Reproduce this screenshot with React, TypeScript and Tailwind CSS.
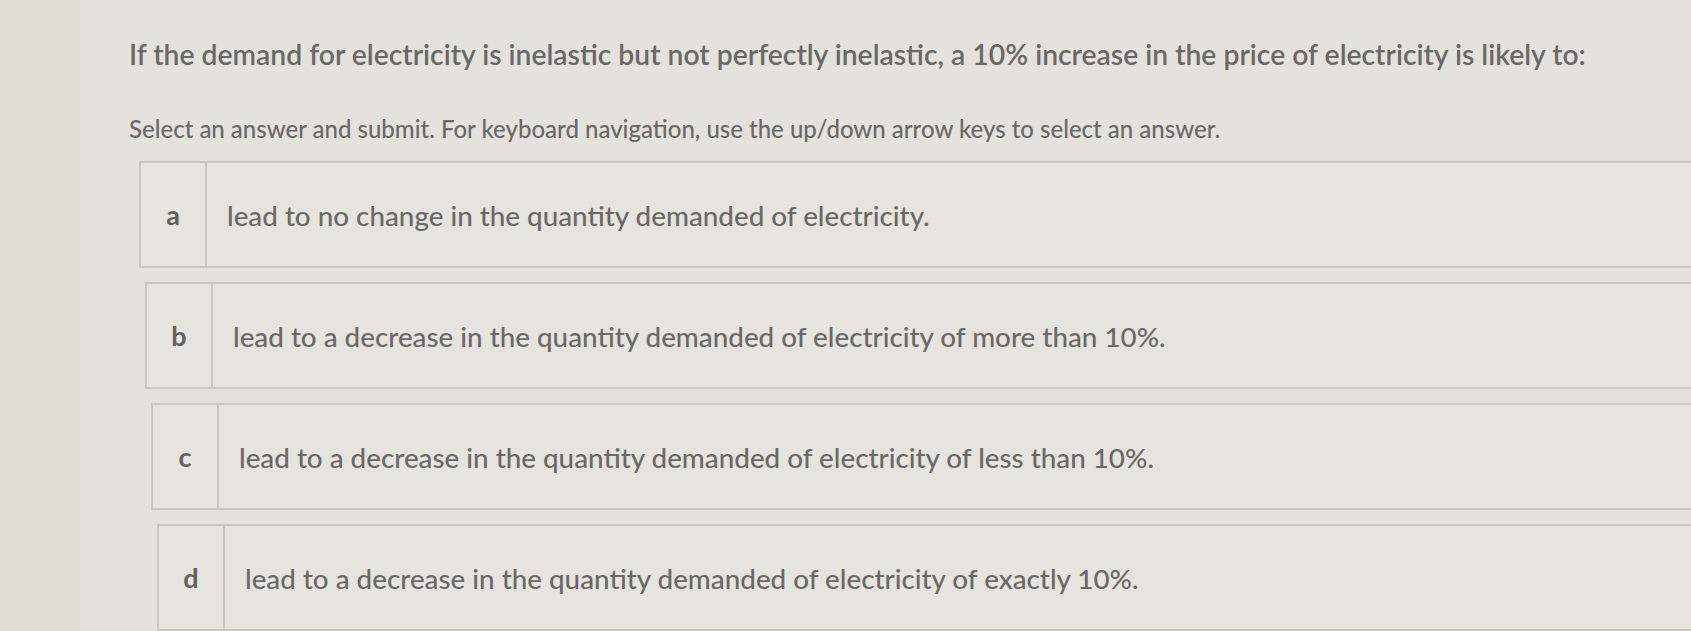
import React from "react";

const options = [
  { letter: "a", text: "lead to no change in the quantity demanded of electricity.", ml: "ml-[10px]" },
  { letter: "b", text: "lead to a decrease in the quantity demanded of electricity of more than 10%.", ml: "ml-[16px]" },
  { letter: "c", text: "lead to a decrease in the quantity demanded of electricity of less than 10%.", ml: "ml-[22px]" },
  { letter: "d", text: "lead to a decrease in the quantity demanded of electricity of exactly 10%.", ml: "ml-[28px]" },
];

export default function App() {
  return (
    <div
      className="flex h-[631px] w-full overflow-hidden bg-[#e4e2dc] text-[#6a6967]"
      style={{ fontFamily: "Lato, 'Noto Sans', sans-serif" }}
    >
      <div className="w-[80px] shrink-0 bg-[#dfddd6]" />
      <div className="flex min-w-0 flex-1 flex-col pl-[49px] pt-[37px]">
        <h1 className="whitespace-nowrap text-[28.3px] font-semibold leading-[34px]">
          If the demand for electricity is inelastic but not perfectly inelastic, a 10% increase in the price of electricity is likely to:
        </h1>
        <p className="mt-[44px] whitespace-nowrap text-[24px] font-medium leading-[28px]">
          Select an answer and submit. For keyboard navigation, use the up/down arrow keys to select an answer.
        </p>
        <div className="mt-[18px] flex flex-col gap-[14px]">
          {options.map((o) => (
            <div
              key={o.letter}
              className={`${o.ml} flex h-[107px] border-y-2 border-l-2 border-[#cac7c1] bg-[#e6e4de]`}
            >
              <div className="flex w-[66px] shrink-0 items-center justify-center border-r-2 border-[#cac7c1] pt-[2px] text-[27px] font-bold text-[#64625e]">
                {o.letter}
              </div>
              <div className="flex items-center whitespace-nowrap pl-[20px] pt-[2px] text-[27.8px] font-medium">
                {o.text}
              </div>
            </div>
          ))}
        </div>
      </div>
    </div>
  );
}
